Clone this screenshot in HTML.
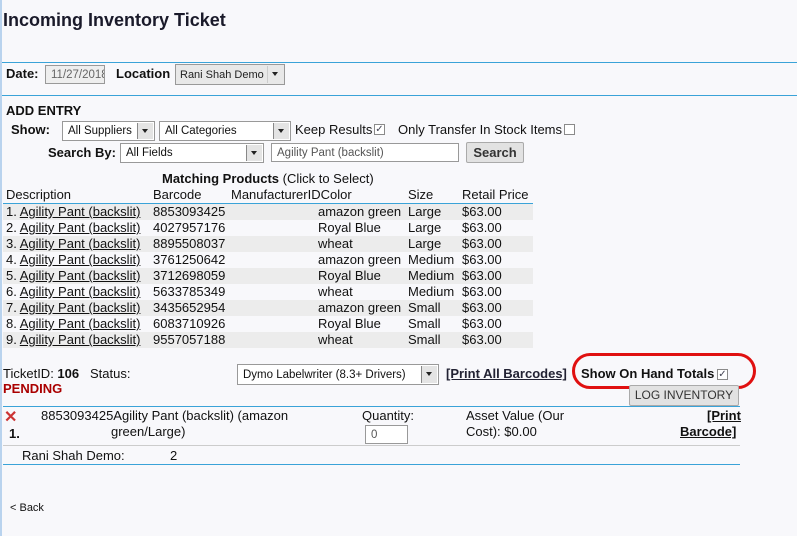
<!DOCTYPE html>
<html><head><style>
body{margin:0;width:797px;height:536px;background:#f8f8fb;font-family:"Liberation Sans",Arial,sans-serif;font-size:13px;color:#111;position:relative;overflow:hidden}
.a{position:absolute;white-space:nowrap}
.stripe{position:absolute;left:0;top:0;width:2px;height:536px;background:#b9d3ee}
.hl{position:absolute;height:1px;background:#3aa3d8}
.sel{position:absolute;background:#fff;border:1px solid #999;font-size:11.5px;box-sizing:border-box;padding:0 5px;display:flex;align-items:center}
.sel .ar{position:absolute;right:1px;top:1px;bottom:1px;width:15px;background:#e4e4e4;border-left:1px solid #888}
.sel .ar:after{content:"";position:absolute;left:4px;top:6px;border:3.5px solid transparent;border-top:4px solid #222}
.cb{position:absolute;width:11px;height:11px;border:1px solid #8a8a8a;background:#fff;box-sizing:border-box;font-size:10px;line-height:9px;color:#445;text-align:center}
.btn{position:absolute;background:#e2e2e2;border:1px solid #aaa;border-radius:2px;box-sizing:border-box;text-align:center;color:#333}
.row{position:absolute;left:3px;width:530px;height:16px}
.row span{position:absolute;top:0px}
u{text-decoration:underline}
</style></head><body>
<div class="stripe"></div>
<div class="a" style="left:3px;top:10px;font-size:18px;font-weight:bold;color:#1a1a2a">Incoming Inventory Ticket</div>
<div class="hl" style="left:2px;top:62px;width:795px"></div>
<div class="a" style="left:6px;top:66px;font-size:13px;font-weight:bold">Date:</div>
<div class="sel" style="left:45px;top:65px;width:60px;height:19px;background:#eee;color:#666;overflow:hidden">11/27/2018</div>
<div class="a" style="left:116px;top:66px;font-size:13px;font-weight:bold">Location</div>
<div class="sel" style="left:175px;top:64px;width:110px;height:21px;background:#e8e8e8;color:#222;font-size:11px;padding:0 4px">Rani Shah Demo<div class="ar" style="background:#e8e8e8;border-left:1px solid #ccc"></div></div>
<div class="hl" style="left:2px;top:95px;width:795px"></div>
<div class="a" style="left:6px;top:103px;font-weight:bold;font-size:13px">ADD ENTRY</div>
<div class="a" style="left:11px;top:122px;font-weight:bold">Show:</div>
<div class="sel" style="left:62px;top:121px;width:93px;height:20px">All Suppliers<div class="ar"></div></div>
<div class="sel" style="left:159px;top:121px;width:132px;height:20px">All Categories<div class="ar"></div></div>
<div class="a" style="left:295px;top:122px">Keep Results</div>
<div class="cb" style="left:374px;top:124px">✓</div>
<div class="a" style="left:398px;top:122px">Only Transfer In Stock Items</div>
<div class="cb" style="left:564px;top:124px"></div>
<div class="a" style="left:48px;top:145px;font-weight:bold">Search By:</div>
<div class="sel" style="left:120px;top:143px;width:144px;height:20px">All Fields<div class="ar"></div></div>
<div class="sel" style="left:271px;top:143px;width:188px;height:19px;color:#555">Agility Pant (backslit)</div>
<div class="btn" style="left:466px;top:142px;width:58px;height:21px;line-height:19px;font-weight:bold">Search</div>
<div class="a" style="left:162px;top:171px"><b>Matching Products</b> (Click to Select)</div>
<div class="a" style="left:6px;top:187px">Description</div>
<div class="a" style="left:153px;top:187px">Barcode</div>
<div class="a" style="left:231px;top:187px">ManufacturerIDColor</div>
<div class="a" style="left:408px;top:187px">Size</div>
<div class="a" style="left:462px;top:187px">Retail Price</div>
<div class="hl" style="left:3px;top:203px;width:530px"></div>
<div class="row" style="top:204px;background:#ececec"><span style="left:3px">1. <u>Agility Pant (backslit)</u></span><span style="left:150px">8853093425</span><span style="left:315px">amazon green</span><span style="left:405px">Large</span><span style="left:459px">$63.00</span></div>
<div class="row" style="top:220px"><span style="left:3px">2. <u>Agility Pant (backslit)</u></span><span style="left:150px">4027957176</span><span style="left:315px">Royal Blue</span><span style="left:405px">Large</span><span style="left:459px">$63.00</span></div>
<div class="row" style="top:236px;background:#ececec"><span style="left:3px">3. <u>Agility Pant (backslit)</u></span><span style="left:150px">8895508037</span><span style="left:315px">wheat</span><span style="left:405px">Large</span><span style="left:459px">$63.00</span></div>
<div class="row" style="top:252px"><span style="left:3px">4. <u>Agility Pant (backslit)</u></span><span style="left:150px">3761250642</span><span style="left:315px">amazon green</span><span style="left:405px">Medium</span><span style="left:459px">$63.00</span></div>
<div class="row" style="top:268px;background:#ececec"><span style="left:3px">5. <u>Agility Pant (backslit)</u></span><span style="left:150px">3712698059</span><span style="left:315px">Royal Blue</span><span style="left:405px">Medium</span><span style="left:459px">$63.00</span></div>
<div class="row" style="top:284px"><span style="left:3px">6. <u>Agility Pant (backslit)</u></span><span style="left:150px">5633785349</span><span style="left:315px">wheat</span><span style="left:405px">Medium</span><span style="left:459px">$63.00</span></div>
<div class="row" style="top:300px;background:#ececec"><span style="left:3px">7. <u>Agility Pant (backslit)</u></span><span style="left:150px">3435652954</span><span style="left:315px">amazon green</span><span style="left:405px">Small</span><span style="left:459px">$63.00</span></div>
<div class="row" style="top:316px"><span style="left:3px">8. <u>Agility Pant (backslit)</u></span><span style="left:150px">6083710926</span><span style="left:315px">Royal Blue</span><span style="left:405px">Small</span><span style="left:459px">$63.00</span></div>
<div class="row" style="top:332px;background:#ececec"><span style="left:3px">9. <u>Agility Pant (backslit)</u></span><span style="left:150px">9557057188</span><span style="left:315px">wheat</span><span style="left:405px">Small</span><span style="left:459px">$63.00</span></div>
<div class="a" style="left:3px;top:366px">TicketID: <b>106</b> &nbsp; Status:</div>
<div class="a" style="left:3px;top:381px;color:#a00;font-weight:bold;font-size:13px">PENDING</div>
<div class="sel" style="left:237px;top:364px;width:202px;height:21px">Dymo Labelwriter (8.3+ Drivers)<div class="ar"></div></div>
<div class="a" style="left:446px;top:366px;font-weight:bold;color:#223"><u>[Print All Barcodes]</u></div>
<div class="a" style="left:581px;top:366px;font-weight:bold;font-size:13px">Show On Hand Totals</div>
<div class="cb" style="left:717px;top:369px">✓</div>
<div class="a" style="left:572px;top:353px;width:178px;height:30px;border:3px solid #e01010;border-radius:18px"></div>
<div class="btn" style="left:629px;top:385px;width:110px;height:21px;line-height:19px;font-size:12px">LOG INVENTORY</div>
<div class="hl" style="left:3px;top:406px;width:737px"></div>
<div class="a" style="left:4px;top:407px;color:#c33;font-size:16px;font-weight:bold">✕</div>
<div class="a" style="left:9px;top:426px;font-weight:bold">1.</div>
<div class="a" style="left:41px;top:408px">8853093425Agility Pant (backslit) (amazon</div>
<div class="a" style="left:111px;top:424px">green/Large)</div>
<div class="a" style="left:362px;top:408px">Quantity:</div>
<div class="sel" style="left:365px;top:425px;width:43px;height:19px;color:#555">0</div>
<div class="a" style="left:466px;top:408px">Asset Value (Our</div>
<div class="a" style="left:466px;top:424px">Cost): $0.00</div>
<div class="a" style="left:707px;top:408px;font-weight:bold"><u>[Print</u></div>
<div class="a" style="left:680px;top:424px;font-weight:bold"><u>Barcode]</u></div>
<div class="a" style="left:3px;top:445px;width:737px;height:1px;background:#ccc"></div>
<div class="a" style="left:22px;top:448px">Rani Shah Demo:</div>
<div class="a" style="left:170px;top:448px">2</div>
<div class="hl" style="left:3px;top:464px;width:737px"></div>
<div class="a" style="left:10px;top:502px;font-size:11px">&lt; Back</div>
</body></html>
